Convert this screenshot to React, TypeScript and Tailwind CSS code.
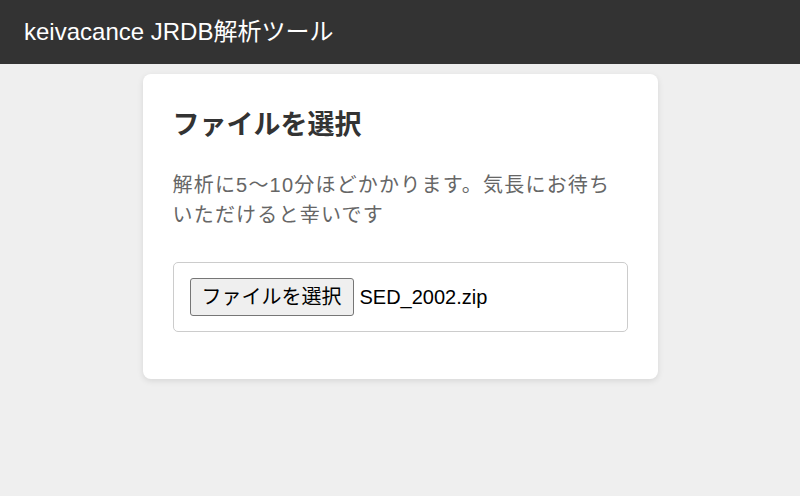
const App = () => {
  return (
    <div
      className="min-h-screen bg-[#efefef] text-[#333]"
      style={{ fontFamily: '"Liberation Sans", "Noto Sans CJK JP", sans-serif' }}
    >
      <header className="h-16 bg-[#333] flex items-center px-6">
        <h1 className="text-[24px] text-white leading-none">keivacance JRDB解析ツール</h1>
      </header>

      <main className="flex justify-center pt-[10px]">
        <div className="w-[515px] bg-white rounded-lg shadow-[0_2px_6px_rgba(0,0,0,0.1)] p-[30px] pb-[47px]">
          <h2 className="text-[27px] font-bold leading-[42px] text-[#333]">ファイルを選択</h2>
          <p className="mt-6 max-w-[445px] text-[20px] leading-[30px] tracking-[1.2px] text-[#666]">
            解析に5〜10分ほどかかります。気長にお待ちいただけると幸いです
          </p>

          <div className="mt-8 border border-[#ccc] rounded-[5px] px-4 py-[15px] flex items-center">
            <button
              type="button"
              className="h-[38px] px-[11px] bg-[#efefef] border border-[#767676] rounded-[3px] text-[20px] text-black leading-none"
            >
              ファイルを選択
            </button>
            <span className="ml-[6px] text-[20px] text-black">SED_2002.zip</span>
          </div>
        </div>
      </main>
    </div>
  );
};

export default App;
